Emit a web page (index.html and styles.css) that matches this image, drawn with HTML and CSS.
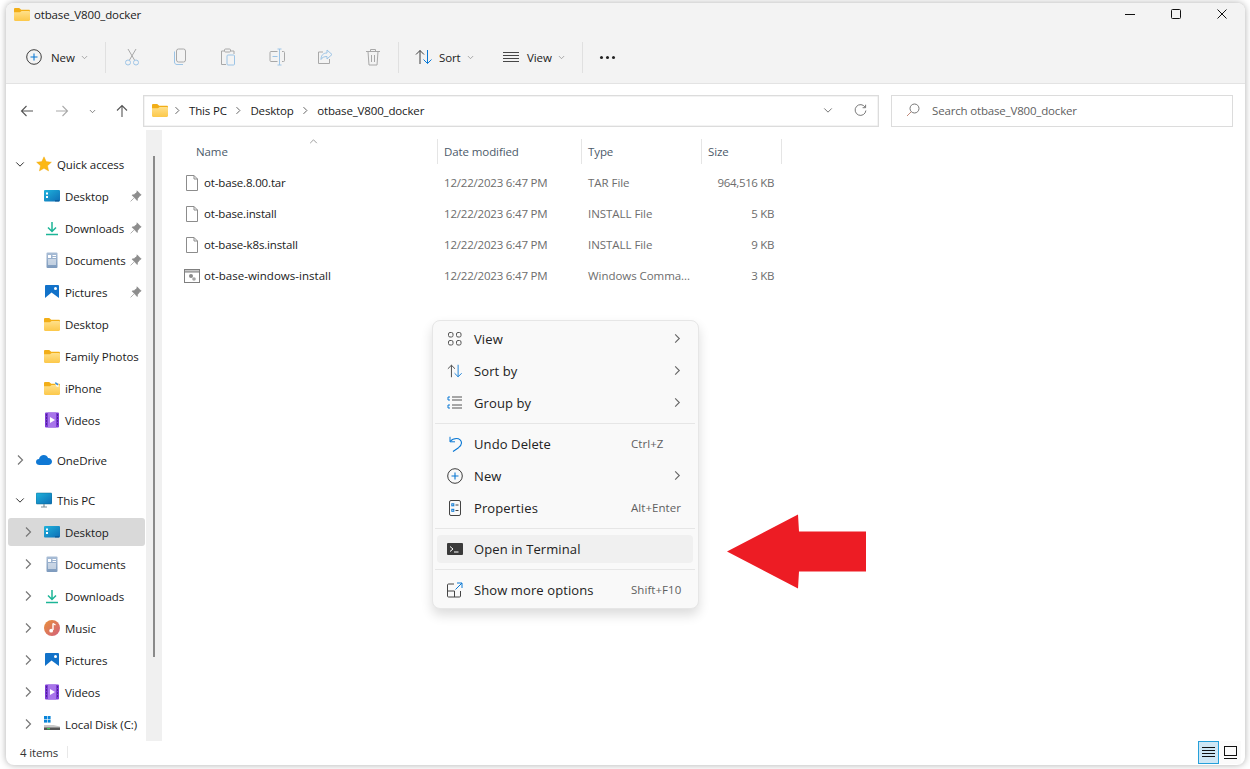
FILE: index.html
```html
<!DOCTYPE html>
<html lang="en">
<head>
<meta charset="utf-8">
<title>otbase_V800_docker</title>
<link rel="stylesheet" href="styles.css">
</head>
<body>
<svg class="defs" aria-hidden="true">
  <defs>
    <linearGradient id="gf" x1="0" y1="0" x2="0" y2="1"><stop offset="0" stop-color="#ffe08a"/><stop offset="1" stop-color="#fcc84a"/></linearGradient>
    <linearGradient id="gd" x1="0" y1="0" x2="1" y2="1"><stop offset="0" stop-color="#1fb3dc"/><stop offset="1" stop-color="#0e6db5"/></linearGradient>
    <linearGradient id="gm" x1="0" y1="0" x2="1" y2="1"><stop offset="0" stop-color="#e8903a"/><stop offset="1" stop-color="#d2607c"/></linearGradient>
    <linearGradient id="gdoc" x1="0" y1="0" x2="0" y2="1"><stop offset="0" stop-color="#a9bdd6"/><stop offset="1" stop-color="#7d9abd"/></linearGradient>
    <symbol id="folder" viewBox="0 0 16 16"><path d="M0 3.200C0 2.500.5 2 1.200 2h4l2 1.800h7.600c.7 0 1.200.5 1.200 1.200v2H0z" fill="#f2ae17"/><path d="M0 6.200h6l1.600-1.200h7.200c.7 0 1.200.5 1.200 1.200v7.600c0 .7-.5 1.200-1.200 1.200H1.200C.5 15 0 14.500 0 13.800z" fill="url(#gf)"/></symbol>
    <symbol id="folder-phone" viewBox="0 0 16 16"><use href="#folder"/><path d="M10 1.500l4.500 2.500v3l-2-.5z" fill="#fff"/><path d="M11.500 2l3 2-1 1.500-2.500-2z" fill="#3d8fd6"/></symbol>
    <symbol id="desk" viewBox="0 0 16 16"><rect x="0" y="2" width="16" height="11.500" rx="1" fill="url(#gd)"/><rect x="2" y="4.500" width="2" height="2" fill="#fff"/><rect x="2" y="8" width="2" height="2" fill="#fff"/><rect x="11" y="12.400" width="4" height="1" fill="#0a4f8a"/></symbol>
    <symbol id="down" viewBox="0 0 16 16"><path d="M8 2v9M4 7.500L8 11.500l4-4" fill="none" stroke="#1cb597" stroke-width="1.500"/><path d="M2 14.500h12" stroke="#1cb597" stroke-width="1.500"/></symbol>
    <symbol id="doc" viewBox="0 0 16 16"><rect x="2.500" y="0.500" width="11" height="15.500" rx="1" fill="url(#gdoc)"/><path d="M8.500 3.500h3.500M8.500 5.500h3.500M4 8h8M4 10h8M4 12h8" stroke="#fff" stroke-width="1"/><rect x="4" y="3" width="3" height="3" fill="#fff"/></symbol>
    <symbol id="pic" viewBox="0 0 16 16"><rect x="1" y="1" width="14" height="14" rx="1" fill="#1272c9"/><path d="M1 15v-1L7.500 8.500 15 14v1z" fill="#fff"/><circle cx="11.500" cy="4.500" r="1.500" fill="#fff"/></symbol>
    <symbol id="vid" viewBox="0 0 16 16"><rect x="1" y="0.500" width="14" height="15" rx="1" fill="#7c3bd6"/><rect x="4" y="0.500" width="8" height="15" fill="#a875ea"/><path d="M6 5l5 3-5 3z" fill="#fff"/><path d="M2 3h1M2 6h1M2 9h1M2 12h1M13 3h1M13 6h1M13 9h1M13 12h1" stroke="#2a0f5c" stroke-width="1.200"/></symbol>
    <symbol id="cloud" viewBox="0 0 16 16"><path d="M3.500 13C1.500 13 0 11.700 0 10s1.200-3 3-3c.6-2.500 2.500-4 4.800-4 2 0 3.600 1.200 4.300 3 2.200.1 3.900 1.700 3.900 3.600 0 2-1.600 3.400-3.700 3.400z" fill="#0f78d4"/></symbol>
    <symbol id="pc" viewBox="0 0 16 16"><rect x="0" y="1" width="16" height="11" rx="1" fill="url(#gd)" stroke="#0f6a8f" stroke-width=".5"/><path d="M8 12v2.500M5 15h6" stroke="#7d8f99" stroke-width="1.200"/></symbol>
    <symbol id="music" viewBox="0 0 16 16"><circle cx="8" cy="8" r="8" fill="url(#gm)"/><path d="M9 3.500v6.500" stroke="#fff" stroke-width="1.400"/><path d="M9 3.500l2.500 1.500" stroke="#fff" stroke-width="1.200"/><circle cx="7.200" cy="10.700" r="1.900" fill="#fff"/></symbol>
    <symbol id="disk" viewBox="0 0 16 16"><rect x="0" y="0" width="3" height="3" fill="#0a85d9"/><rect x="3.600" y="0" width="3" height="3" fill="#0a85d9"/><rect x="0" y="3.600" width="3" height="3" fill="#0a85d9"/><rect x="3.600" y="3.600" width="3" height="3" fill="#0a85d9"/><path d="M0 9h9.500L16 10.500V14H0z" fill="#c9c9c9"/><path d="M0 11.500h16V14H0z" fill="#555"/><rect x="3" y="12.200" width="3" height="1" fill="#3ce05a"/></symbol>
    <symbol id="star" viewBox="0 0 16 16"><path d="M8 .8l2.200 4.800 5.200.6-3.900 3.500 1.100 5.200L8 12.300l-4.600 2.600 1.100-5.200L.6 6.200l5.200-.6z" fill="#fcb814" stroke="#eda70a" stroke-width=".4"/></symbol>
    <symbol id="pin" viewBox="0 0 12 12"><path d="M7 .8l4.200 4.200-1.200.5-2.400 3-.4 2L2 5.100l2-.4 3-2.400zM3.800 8.200L.6 11.400" fill="#8d8d8d" stroke="#8d8d8d" stroke-width=".7"/></symbol>
    <symbol id="file" viewBox="0 0 12 16"><path d="M.5.500h7.500l3.500 3.500v11.500H.5zM8 .5v3.500h3.500" fill="#fff" stroke="#8c8c8c"/></symbol>
    <symbol id="cmd" viewBox="0 0 16 14"><rect x=".5" y=".5" width="15" height="13" fill="#fff" stroke="#7f7f7f"/><rect x=".5" y=".5" width="15" height="2.500" fill="#c8c8c8" stroke="#7f7f7f"/><circle cx="7" cy="7" r="2" fill="#8a8a8a"/><circle cx="10" cy="10" r="1.800" fill="#a5a5a5"/></symbol>
    <symbol id="chev-r" viewBox="0 0 8 12"><path d="M2 1.500L6.500 6 2 10.500" fill="none" stroke="currentColor" stroke-width="1.200"/></symbol>
    <symbol id="chev-d" viewBox="0 0 12 8"><path d="M1.500 1.500L6 6l4.500-4.500" fill="none" stroke="currentColor" stroke-width="1.200"/></symbol>
    <symbol id="plus" viewBox="0 0 16 16"><circle cx="8" cy="8" r="7.300" fill="none" stroke="#3d3d3d" stroke-width="1"/><path d="M8 4.500v7M4.500 8h7" stroke="#0a78d4" stroke-width="1.100"/></symbol>
    <symbol id="sort" viewBox="0 0 18 16"><path d="M5 15V1.500M1 5.500l4-4 4 4" fill="none" stroke="#3d3d3d" stroke-width="1"/><path d="M12.500 1v13.500M8.500 10.500l4 4 4-4" fill="none" stroke="#0a78d4" stroke-width="1"/></symbol>
  </defs>
</svg>

<div class="window">
  <header class="chrome">
    <div class="titlebar">
      <svg class="ic16 title-ic"><use href="#folder"/></svg>
      <span class="title">otbase_V800_docker</span>
      <div class="wincontrols">
        <svg class="winbtn" viewBox="0 0 12 12"><path d="M1 6.500h10" stroke="#111" stroke-width="1"/></svg>
        <svg class="winbtn" viewBox="0 0 12 12"><rect x="1.500" y="1.500" width="9" height="9" rx="1" fill="none" stroke="#111"/></svg>
        <svg class="winbtn" viewBox="0 0 12 12"><path d="M1.500 1.500l9 9M10.500 1.500l-9 9" stroke="#111"/></svg>
      </div>
    </div>
    <div class="toolbar">
      <div class="tb-btn tb-new">
        <svg class="ic16"><use href="#plus"/></svg><span class="tb-label">New</span><svg class="tb-chev"><use href="#chev-d"/></svg>
      </div>
      <i class="tb-sep"></i>
      <div class="tb-group">
        <svg class="tb-ic" viewBox="0 0 16 18" fill="none"><path d="M4 1l6.500 11M12 1L5.500 12" stroke="#a8a8a8"/><circle cx="4" cy="14.500" r="2.500" stroke="#9cc4e6"/><circle cx="12" cy="14.500" r="2.500" stroke="#9cc4e6"/></svg>
        <svg class="tb-ic" viewBox="0 0 16 18" fill="none"><rect x="4.500" y="1" width="9" height="13" rx="2" stroke="#a8a8a8"/><path d="M2.500 3.500v10.500c0 1.500 1 2.500 2.500 2.500h6" stroke="#9cc4e6"/></svg>
        <svg class="tb-ic" viewBox="0 0 16 18" fill="none"><path d="M4 3H1.500v13.500H6M11 3h3v3" stroke="#a8a8a8"/><rect x="4.500" y="1" width="6" height="3" rx="1" stroke="#a8a8a8"/><rect x="7" y="7" width="7.500" height="10" rx="1" stroke="#9cc4e6"/></svg>
        <svg class="tb-ic" viewBox="0 0 16 18" fill="none"><path d="M8.500 3.500H2a1 1 0 0 0-1 1v8a1 1 0 0 0 1 1h6.500M13 3.500h1.500a1 1 0 0 1 1 1v8a1 1 0 0 1-1 1H13" stroke="#a8a8a8"/><path d="M3.500 8.500h5M10.500 1v16M8.500 1h4M8.500 17h4" stroke="#9cc4e6"/></svg>
        <svg class="tb-ic" viewBox="0 0 16 18" fill="none"><path d="M6 4H1.500v11.500h11V11" stroke="#a8a8a8"/><path d="M10 2l5 4.500-5 4.500V8.500c-3 0-5 1-6 3 0-4 2-6.500 6-6.500z" stroke="#9cc4e6"/></svg>
        <svg class="tb-ic" viewBox="0 0 16 18" fill="none"><path d="M1 3.500h14M5.500 3.500V1.500h5v2M3 3.500l1 13.500h8l1-13.500M6.500 7v7M9.500 7v7" stroke="#a8a8a8"/></svg>
      </div>
      <i class="tb-sep tb-sep2"></i>
      <div class="tb-btn tb-sort">
        <svg class="ic-sort"><use href="#sort"/></svg><span class="tb-label">Sort</span><svg class="tb-chev"><use href="#chev-d"/></svg>
      </div>
      <div class="tb-btn tb-view">
        <svg class="ic16" viewBox="0 0 16 16"><path d="M0 3.500h16M0 6.500h16M0 9.500h16M0 12.500h16" stroke="#333" stroke-width=".9"/></svg><span class="tb-label">View</span><svg class="tb-chev"><use href="#chev-d"/></svg>
      </div>
      <i class="tb-sep tb-sep3"></i>
      <div class="tb-more"><b></b><b></b><b></b></div>
    </div>
  </header>

  <div class="addressrow">
    <div class="navbtns">
      <svg class="nb nb-back" viewBox="0 0 14 14" fill="none"><path d="M13 7H1.500M6.500 2L1.500 7l5 5" stroke="#555" stroke-width="1.100"/></svg>
      <svg class="nb nb-fwd" viewBox="0 0 14 14" fill="none"><path d="M1 7h11.500M7.500 2l5 5-5 5" stroke="#aaa" stroke-width="1.100"/></svg>
      <svg class="nb nb-rec"><use href="#chev-d"/></svg>
      <svg class="nb nb-up" viewBox="0 0 14 14" fill="none"><path d="M7 13V1.500M2 6.500l5-5 5 5" stroke="#555" stroke-width="1.100"/></svg>
    </div>
    <div class="addr">
      <svg class="ic16 addr-ic"><use href="#folder"/></svg>
      <svg class="crumb-sep crumb-sep1"><use href="#chev-r"/></svg><span class="crumb">This PC</span>
      <svg class="crumb-sep"><use href="#chev-r"/></svg><span class="crumb">Desktop</span>
      <svg class="crumb-sep"><use href="#chev-r"/></svg><span class="crumb">otbase_V800_docker</span>
      <svg class="addr-drop"><use href="#chev-d"/></svg>
      <svg class="addr-refresh" viewBox="0 0 14 14" fill="none"><path d="M12 3.500A5.800 5.800 0 1 0 12.800 7" stroke="#6e6e6e" stroke-width="1"/><path d="M12.500 .8v3.200H9.300" stroke="#6e6e6e" stroke-width="1"/></svg>
    </div>
    <div class="search">
      <svg class="search-ic" viewBox="0 0 14 14" fill="none"><circle cx="8.500" cy="5.500" r="4.500" stroke="#777"/><path d="M5.200 8.800L1 13" stroke="#c08a7a"/></svg>
      <span class="search-text">Search otbase_V800_docker</span>
    </div>
  </div>

  <div class="main">
    <nav class="sidebar">
      <div class="nav-row top"><svg class="tw open"><use href="#chev-d"/></svg><svg class="ic16"><use href="#star"/></svg><span>Quick access</span></div>
      <div class="nav-row sub"><svg class="ic16"><use href="#desk"/></svg><span>Desktop</span><svg class="pin"><use href="#pin"/></svg></div>
      <div class="nav-row sub"><svg class="ic16"><use href="#down"/></svg><span>Downloads</span><svg class="pin"><use href="#pin"/></svg></div>
      <div class="nav-row sub"><svg class="ic16"><use href="#doc"/></svg><span>Documents</span><svg class="pin"><use href="#pin"/></svg></div>
      <div class="nav-row sub"><svg class="ic16"><use href="#pic"/></svg><span>Pictures</span><svg class="pin"><use href="#pin"/></svg></div>
      <div class="nav-row sub"><svg class="ic16"><use href="#folder"/></svg><span>Desktop</span></div>
      <div class="nav-row sub"><svg class="ic16"><use href="#folder"/></svg><span>Family Photos</span></div>
      <div class="nav-row sub"><svg class="ic16"><use href="#folder-phone"/></svg><span>iPhone</span></div>
      <div class="nav-row sub"><svg class="ic16"><use href="#vid"/></svg><span>Videos</span></div>
      <div class="nav-row top gap"><svg class="tw"><use href="#chev-r"/></svg><svg class="ic16"><use href="#cloud"/></svg><span>OneDrive</span></div>
      <div class="nav-row top gap"><svg class="tw open"><use href="#chev-d"/></svg><svg class="ic16"><use href="#pc"/></svg><span>This PC</span></div>
      <div class="nav-row child selected"><svg class="tw"><use href="#chev-r"/></svg><svg class="ic16"><use href="#desk"/></svg><span>Desktop</span></div>
      <div class="nav-row child"><svg class="tw"><use href="#chev-r"/></svg><svg class="ic16"><use href="#doc"/></svg><span>Documents</span></div>
      <div class="nav-row child"><svg class="tw"><use href="#chev-r"/></svg><svg class="ic16"><use href="#down"/></svg><span>Downloads</span></div>
      <div class="nav-row child"><svg class="tw"><use href="#chev-r"/></svg><svg class="ic16"><use href="#music"/></svg><span>Music</span></div>
      <div class="nav-row child"><svg class="tw"><use href="#chev-r"/></svg><svg class="ic16"><use href="#pic"/></svg><span>Pictures</span></div>
      <div class="nav-row child"><svg class="tw"><use href="#chev-r"/></svg><svg class="ic16"><use href="#vid"/></svg><span>Videos</span></div>
      <div class="nav-row child"><svg class="tw"><use href="#chev-r"/></svg><svg class="ic16"><use href="#disk"/></svg><span>Local Disk (C:)</span></div>
    </nav>
    <div class="nav-scroll"><div class="nav-thumb"></div></div>

    <section class="files">
      <div class="fhead">
        <svg class="sort-caret" viewBox="0 0 10 6" fill="none"><path d="M1 5l4-4 4 4" stroke="#8a8a8a"/></svg>
        <div class="fh fh-name">Name</div>
        <div class="fh">Date modified</div>
        <div class="fh">Type</div>
        <div class="fh">Size</div>
      </div>
      <div class="frow"><div class="fname"><svg class="fic"><use href="#file"/></svg><span>ot-base.8.00.tar</span></div><div class="fcell">12/22/2023 6:47 PM</div><div class="fcell ftype">TAR File</div><div class="fcell fsize">964,516 KB</div></div>
      <div class="frow"><div class="fname"><svg class="fic"><use href="#file"/></svg><span>ot-base.install</span></div><div class="fcell">12/22/2023 6:47 PM</div><div class="fcell ftype">INSTALL File</div><div class="fcell fsize">5 KB</div></div>
      <div class="frow"><div class="fname"><svg class="fic"><use href="#file"/></svg><span>ot-base-k8s.install</span></div><div class="fcell">12/22/2023 6:47 PM</div><div class="fcell ftype">INSTALL File</div><div class="fcell fsize">9 KB</div></div>
      <div class="frow"><div class="fname"><svg class="fic fic-cmd"><use href="#cmd"/></svg><span>ot-base-windows-install</span></div><div class="fcell">12/22/2023 6:47 PM</div><div class="fcell ftype">Windows Comma...</div><div class="fcell fsize">3 KB</div></div>

      <div class="menu">
        <div class="mi"><svg class="mi-ic" viewBox="0 0 16 16" fill="none" stroke="#555"><rect x="1.500" y="1.500" width="4.500" height="4.500" rx="1.500"/><rect x="9.500" y="1.500" width="4.500" height="4.500" rx="1.500"/><rect x="1.500" y="9.500" width="4.500" height="4.500" rx="1.500"/><rect x="9.500" y="9.500" width="4.500" height="4.500" rx="1.500"/></svg><span class="mi-label">View</span><svg class="mi-arrow"><use href="#chev-r"/></svg></div>
        <div class="mi"><svg class="mi-ic"><use href="#sort"/></svg><span class="mi-label">Sort by</span><svg class="mi-arrow"><use href="#chev-r"/></svg></div>
        <div class="mi"><svg class="mi-ic" viewBox="0 0 16 16" fill="none"><path d="M3 2H1v3h2M3 10H1v3h2" stroke="#0a78d4"/><path d="M5 2h10M5 5h10M5 10h10M5 13h10" stroke="#555"/></svg><span class="mi-label">Group by</span><svg class="mi-arrow"><use href="#chev-r"/></svg></div>
        <hr class="msep">
        <div class="mi"><svg class="mi-ic" viewBox="0 0 16 16" fill="none" stroke="#0a78d4"><path d="M3 .8v5h5"/><path d="M3 5.500C5 3.300 7 2.500 9.500 2.500c3 0 5 2 5 4.500 0 2-1.300 3.300-3 4.700L6 15.500" stroke-width="1.100"/></svg><span class="mi-label">Undo Delete</span><span class="mi-key">Ctrl+Z</span></div>
        <div class="mi"><svg class="mi-ic"><use href="#plus"/></svg><span class="mi-label">New</span><svg class="mi-arrow"><use href="#chev-r"/></svg></div>
        <div class="mi"><svg class="mi-ic" viewBox="0 0 16 16" fill="none"><rect x="2.500" y=".5" width="11" height="15" rx="1.500" stroke="#444"/><rect x="4.800" y="3.800" width="2" height="2" stroke="#0a78d4"/><rect x="4.800" y="9.300" width="2" height="2" stroke="#0a78d4"/><path d="M8.500 5h3M8.500 10.500h3" stroke="#444"/></svg><span class="mi-label">Properties</span><span class="mi-key">Alt+Enter</span></div>
        <hr class="msep">
        <div class="mi mi-hover"><svg class="mi-ic" viewBox="0 0 16 16"><rect x="0" y="2" width="16" height="12" rx="1" fill="#3a3a3a"/><path d="M3 5.500L6 8l-3 2.500" fill="none" stroke="#fff"/><path d="M7 11h4.500" stroke="#fff"/></svg><span class="mi-label">Open in Terminal</span></div>
        <hr class="msep">
        <div class="mi"><svg class="mi-ic" viewBox="0 0 16 16" fill="none"><path d="M7 2H1.500a1 1 0 0 0-1 1v11a1 1 0 0 0 1 1h11a1 1 0 0 0 1-1V9M.5 9h7v6" stroke="#444"/><path d="M10 1h5v5M15 1L8.500 7.500" stroke="#0a78d4"/></svg><span class="mi-label">Show more options</span><span class="mi-key">Shift+F10</span></div>
      </div>

      <svg class="red-arrow" viewBox="0 0 140 76"><path d="M0 37.500L71 0.500l1 17h67v40H72l-1 17z" fill="#ed1c24"/></svg>
    </section>
  </div>

  <footer class="status">
    <span class="count">4 items</span>
    <i class="status-sep"></i>
    <div class="viewbtns">
      <div class="vb vb-on"><svg class="vb-ic" viewBox="0 0 13 13"><path d="M0 1.500h13M0 4.500h13M0 7.500h13M0 10.500h13" stroke="#111"/></svg></div>
      <div class="vb"><svg class="vb-ic" viewBox="0 0 13 13" fill="none"><rect x=".5" y=".5" width="12" height="9" stroke="#111"/><path d="M0 12.500h13" stroke="#111"/></svg></div>
    </div>
  </footer>
</div>
</body>
</html>
```

FILE: styles.css
```css
* { box-sizing: border-box; }
html, body { margin: 0; padding: 0; background: #fff; }
body { width: 1250px; height: 769px; overflow: hidden; padding: 3px 5px 4px 6px; font-family: "Open Sans", "Noto Sans", sans-serif; font-size: 11.5px; color: #1a1a1a; }
.defs { position: absolute; width: 0; height: 0; }

.window { width: 1239px; height: 762px; display: flex; flex-direction: column; background: #fff; border-radius: 8px; overflow: hidden; box-shadow: 0 0 7px rgba(0,0,0,.32); position: relative; }
.window svg { display: block; flex: none; }
.ic16 { width: 16px; height: 16px; }

.chrome { height: 81px; flex: none; background: #f3f3f3; border-bottom: 1px solid #e3e3e3; }
.titlebar { height: 26px; padding: 0 0 4px 8px; display: flex; align-items: center; }
.title-ic { margin-right: 4px; }
.title { font-size: 11.5px; letter-spacing: -.15px; }
.wincontrols { margin-left: auto; display: flex; gap: 34px; padding-right: 17px; }
.winbtn { width: 12px; height: 12px; }

.toolbar { height: 54px; display: flex; align-items: center; padding-top: 2px; }
.tb-btn { display: flex; align-items: center; }
.tb-new { padding-left: 20px; width: 99px; }
.tb-label { font-size: 11.5px; margin-left: 9px; color: #222; letter-spacing: -.1px; }
.tb-chev { width: 7px; height: 5px; margin-left: 6px; color: #8a8a8a; }
.tb-sep { width: 1px; height: 31px; background: #e0e0e0; flex: none; }
.tb-group { display: flex; padding-left: 18px; gap: 32.200px; width: 292px; }
.tb-ic { width: 16px; height: 18px; }
.tb-sort { padding-left: 16px; width: 104px; }
.ic-sort { width: 18px; height: 16px; }
.tb-sort .tb-label { margin-left: 6px; }
.tb-view { width: 79px; }
.tb-view .tb-label { margin-left: 8px; }
.tb-more { display: flex; gap: 3px; padding-left: 17px; }
.tb-more b { width: 3px; height: 3px; border-radius: 50%; background: #222; }

.addressrow { height: 46px; flex: none; display: flex; align-items: flex-start; padding-top: 11px; }
.navbtns { width: 137px; height: 14px; margin-top: 9px; display: flex; align-items: center; }
.nb { width: 14px; height: 14px; }
.nb-back { margin-left: 14px; }
.nb-fwd { margin-left: 21px; }
.nb-rec { width: 7px; height: 5px; margin-left: 19.500px; color: #555; }
.nb-up { margin-left: 19.500px; }
.addr { width: 736px; height: 32px; border: 1px solid #dcdcdc; box-shadow: inset 0 0 0 .5px #e8e8e8; display: flex; align-items: center; padding: 0 0 2px 8px; }
.crumb-sep { width: 6px; height: 9px; color: #555; margin: 0 9px 0 8.500px; }
.crumb-sep1 { margin-left: 6px; }
.crumb { font-size: 11.5px; letter-spacing: -.15px; }
.addr-drop { width: 10px; height: 7px; color: #777; margin-left: auto; }
.addr-refresh { width: 13px; height: 13px; margin: 0 11px 0 21px; }
.search { width: 342px; height: 32px; margin-left: 12px; border: 1px solid #dcdcdc; display: flex; align-items: center; padding: 0 0 2px 14px; }
.search-ic { width: 14px; height: 14px; }
.search-text { margin-left: 12px; font-size: 11.5px; color: #5f5f5f; letter-spacing: -.17px; }

.main { flex: 1; min-height: 0; display: flex; position: relative; }
.sidebar { width: 140px; flex: none; overflow: hidden; padding-top: 18px; }
.nav-row { height: 32px; display: flex; align-items: center; white-space: nowrap; font-size: 11.5px; letter-spacing: -.1px; margin-left: 2px; position: relative; }
.nav-row.top { padding-left: 8px; }
.nav-row.gap { margin-top: 8px; }
.nav-row.sub { padding-left: 36px; }
.nav-row.child { padding-left: 16px; }
.tw { width: 8px; height: 12px; color: #777; margin-right: 12px; }
.tw.open { width: 10px; height: 7px; color: #333; margin-left: -1px; margin-right: 11px; }
.nav-row .ic16 { margin-right: 5px; }
.pin { position: absolute; left: 122px; top: 10px; width: 12px; height: 12px; }
.selected::before { content: ""; position: absolute; left: 0; right: 1px; top: 2px; bottom: 2px; background: #d9d9d9; border-radius: 3px; }
.selected > * { position: relative; }
.nav-scroll { width: 16px; flex: none; background: #f0f0f0; margin-right: 2px; padding: 26px 0 84px 7px; }
.nav-thumb { width: 2px; height: 501px; background: #8a8a8a; }

.files { flex: 1; position: relative; }
.fhead, .frow { display: grid; grid-template-columns: 274px 144px 120px 80px; width: 618px; }
.fhead { height: 37px; padding-top: 9px; position: relative; }
.fh { height: 25px; border-right: 1px solid #e5e5e5; padding: 5px 0 0 6px; font-size: 11.5px; color: #4c5a6a; letter-spacing: -.1px; }
.fh-name { padding-left: 32px; }
.sort-caret { position: absolute; left: 145px; top: 9px; width: 9px; height: 5px; }
.frow { height: 31px; align-items: center; font-size: 11.5px; color: #6d6d6d; letter-spacing: -.2px; }
.fname { display: flex; align-items: center; padding-left: 22px; color: #1a1a1a; letter-spacing: -.15px; }
.fname span { margin-left: 6px; }
.fic { width: 12px; height: 16px; }
.fic-cmd { width: 16px; height: 14px; margin-left: -2px; }
.fic-cmd + span { margin-left: 4px; letter-spacing: .02px; }
.fcell { padding-left: 6px; white-space: nowrap; }
.ftype { letter-spacing: -.05px; }
.fsize { text-align: right; padding: 0 8px 0 0; letter-spacing: -.35px; }

.menu { position: absolute; left: 268px; top: 190px; width: 267px; height: 289px; background: #f9f9f9; border: 1px solid #e6e6e6; border-radius: 8px; box-shadow: 0 6px 12px rgba(0,0,0,.14); padding: 2px 5px 2px 4px; }
.mi { height: 32px; display: flex; align-items: center; position: relative; font-size: 13px; color: #222; letter-spacing: .1px; padding-left: 10px; }
.mi-ic { width: 16px; height: 16px; }
.mi-label { margin-left: 11px; }
.mi-arrow { position: absolute; left: 236px; top: 10px; width: 8px; height: 11px; color: #666; }
.mi-key { position: absolute; left: 194px; top: 8px; font-size: 11.5px; color: #5f5f5f; letter-spacing: .05px; }
.msep { border: 0; height: 1px; background: #e6e6e6; margin: 4px -2px; }
.mi-hover { height: 28px; background: #f0f0f0; border-radius: 4px; margin: 6px 0; }

.red-arrow { position: absolute; left: 563px; top: 384px; width: 140px; height: 76px; }

.status { height: 24px; flex: none; display: flex; align-items: center; font-size: 11.5px; color: #333; padding: 0 0 2px 14px; }
.count { width: 47px; letter-spacing: -.15px; }
.status-sep { width: 1px; height: 12px; background: #e8e8e8; }
.viewbtns { margin-left: auto; display: flex; padding-right: 4px; }
.vb { width: 21px; height: 23px; display: flex; align-items: center; justify-content: center; }
.vb-on { background: #cfe7f5; border: 1px solid #26a0da; }
.vb-ic { width: 13px; height: 13px; }
.vb + .vb { margin-left: 1px; background: #fbfbfb; }
```
